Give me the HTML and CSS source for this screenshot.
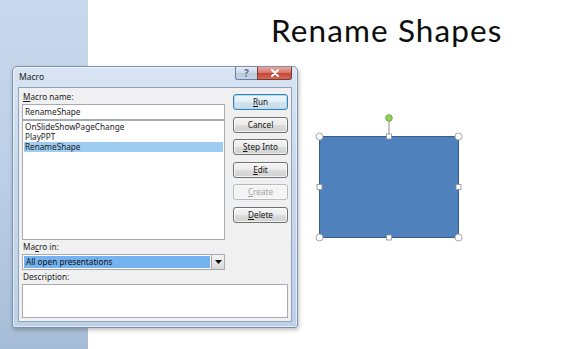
FILE: index.html
```html
<!DOCTYPE html>
<html>
<head>
<meta charset="utf-8">
<link rel="stylesheet" href="styles.css">
</head>
<body>
<div class="screen">
  <div class="strip"></div>
  <div class="slide">
    <h1 class="slide-title">Rename Shapes</h1>
    <svg class="shape" viewBox="88 0 492 349" width="492" height="349">
      <line x1="389" y1="121" x2="389" y2="134" stroke="#8c8c8c" stroke-width="1"/>
      <rect x="319.5" y="136.5" width="139" height="101" fill="#4f81bd" stroke="#385d8a" stroke-width="1"/>
      <circle cx="389" cy="118" r="3.3" fill="#8fd14f" stroke="#5f9b35" stroke-width="0.8"/>
      <g fill="#ffffff" stroke="#8a8f96" stroke-width="0.8">
        <circle cx="319.5" cy="136.5" r="3.5"/>
        <circle cx="458.5" cy="136.5" r="3.5"/>
        <circle cx="319.5" cy="237.5" r="3.5"/>
        <circle cx="458.5" cy="237.5" r="3.5"/>
        <rect x="386.5" y="134" width="5" height="5"/>
        <rect x="386.5" y="235" width="5" height="5"/>
        <rect x="317" y="184.5" width="5" height="5"/>
        <rect x="456" y="184.5" width="5" height="5"/>
      </g>
    </svg>
  </div>

  <div class="dialog">
    <div class="titlebar">
      <span class="dlg-title">Macro</span>
      <div class="caption-btns">
        <div class="cap-btn help">?</div>
        <div class="cap-btn close">
          <svg width="10" height="8" viewBox="0 0 10 8"><path d="M2 1 L8 7 M8 1 L2 7" stroke="#ffffff" stroke-width="2" stroke-linecap="round"/></svg>
        </div>
      </div>
    </div>
    <div class="client">
      <div class="top">
        <div class="left">
          <div class="label"><u>M</u>acro name:</div>
          <div class="field">RenameShape</div>
          <div class="list">
            <div class="item">OnSlideShowPageChange</div>
            <div class="item">PlayPPT</div>
            <div class="item selected">RenameShape</div>
          </div>
          <div class="label">Ma<u>c</u>ro in:</div>
          <div class="combo">
            <div class="combo-value">All open presentations</div>
            <div class="combo-arrow"><svg width="7" height="4" viewBox="0 0 7 4"><path d="M0 0 H7 L3.5 4 Z" fill="#111"/></svg></div>
          </div>
        </div>
        <div class="buttons">
          <div class="btn default"><u>R</u>un</div>
          <div class="btn">Cancel</div>
          <div class="btn"><u>S</u>tep Into</div>
          <div class="btn"><u>E</u>dit</div>
          <div class="btn disabled"><u>C</u>reate</div>
          <div class="btn"><u>D</u>elete</div>
        </div>
      </div>
      <div class="label">Description:</div>
      <div class="desc"></div>
    </div>
  </div>
</div>
</body>
</html>
```
FILE: styles.css
```css
html, body {
  margin: 0;
  padding: 0;
}
body {
  width: 580px;
  height: 349px;
  overflow: hidden;
  background: #ffffff;
}
.screen {
  position: relative;
  display: flex;
  width: 580px;
  height: 349px;
}
.strip {
  width: 88px;
  flex: none;
  background: linear-gradient(180deg, #c9d9ed 0%, #bccfe6 50%, #a7bdd7 100%);
}
.slide {
  position: relative;
  flex: 1;
  background: #ffffff;
}
.slide-title {
  margin: 12px 0 0 183px;
  font-family: Lato, "Open Sans", sans-serif;
  font-weight: 400;
  font-size: 31.5px;
  letter-spacing: 1.1px;
  line-height: 36px;
  color: #0d0d0d;
}
.shape {
  position: absolute;
  left: 0;
  top: 0;
}

/* dialog window */
.dialog {
  position: absolute;
  left: 12px;
  top: 66px;
  width: 274px;
  height: 255px;
  padding: 0 5px 5px 5px;
  border: 1px solid #7d91aa;
  border-radius: 5px 5px 3px 3px;
  background: linear-gradient(180deg, #d8e4f3 0%, #c9d9ed 40%, #bed1e8 100%);
  box-shadow: 1px 2px 4px rgba(0,0,0,0.25), inset 0 0 0 1px rgba(255,255,255,0.55);
  font-family: "Noto Sans", "Open Sans", sans-serif;
  color: #1b1b1b;
}
.titlebar {
  height: 20px;
  display: flex;
  align-items: flex-start;
  justify-content: space-between;
}
.dlg-title {
  margin: 4px 0 0 1px;
  font-size: 8.5px;
  line-height: 12px;
  color: #1a1a1a;
}
.caption-btns {
  display: flex;
}
.cap-btn {
  height: 12px;
  border: 1px solid #6c7f98;
  border-top: none;
  display: flex;
  align-items: center;
  justify-content: center;
}
.cap-btn.help {
  width: 21px;
  border-radius: 0 0 0 3px;
  border-right: none;
  background: linear-gradient(180deg, #e3ebf5 0%, #cdd9e8 50%, #b9c9dd 51%, #c8d6e7 100%);
  font-size: 10px;
  font-weight: bold;
  color: #5f7089;
  line-height: 12px;
}
.cap-btn.close {
  width: 33px;
  border-radius: 0 0 3px 0;
  border-color: #7a3a33;
  background: linear-gradient(180deg, #e9a99f 0%, #d7786b 45%, #c4473a 55%, #d56b54 100%);
}

.client {
  border: 1px solid #8fa3bb;
  background: #f0f0f0;
  display: flex;
  flex-direction: column;
  padding: 2px 3px 3px 3px;
  box-sizing: border-box;
  height: 235px;
}
.top {
  display: grid;
  grid-template-columns: 203px 55px;
  column-gap: 8px;
}
.left {
  display: flex;
  flex-direction: column;
}
.label {
  height: 14px;
  font-size: 8.2px;
  line-height: 14px;
  padding-left: 1px;
}
.label u, .btn u {
  text-decoration-thickness: 1px;
  text-underline-offset: 1px;
}
.field {
  height: 16px;
  box-sizing: border-box;
  border: 1px solid #a6abb3;
  background: #ffffff;
  font-size: 8.2px;
  line-height: 14px;
  padding-left: 2px;
}
.list {
  height: 120px;
  box-sizing: border-box;
  border: 1px solid #a6abb3;
  background: #ffffff;
  padding: 1px 1px 0 1px;
}
.item {
  height: 10px;
  font-size: 8.2px;
  line-height: 10px;
  padding-left: 1px;
  white-space: nowrap;
}
.item.selected {
  background: #9ecbf1;
}
.combo {
  height: 16px;
  box-sizing: border-box;
  display: flex;
  border: 1px solid #a6abb3;
  background: #ffffff;
}
.combo-value {
  flex: 1;
  margin: 1px;
  background: #74b3ef;
  font-size: 8.2px;
  line-height: 12px;
  padding-left: 2px;
  color: #101010;
}
.combo-arrow {
  width: 12px;
  border-left: 1px solid #a0a5ad;
  background: linear-gradient(180deg, #f4f4f4 0%, #e6e6e6 50%, #d8d8d8 100%);
  display: flex;
  align-items: center;
  justify-content: center;
}
.buttons {
  display: flex;
  flex-direction: column;
  padding-top: 4px;
  gap: 6.5px;
}
.btn {
  height: 16px;
  box-sizing: border-box;
  border: 1px solid #707070;
  border-radius: 3px;
  background: linear-gradient(180deg, #f4f4f4 0%, #ebebeb 48%, #dddddd 52%, #d0d0d0 100%);
  box-shadow: inset 0 0 0 1px rgba(255,255,255,0.7);
  font-size: 8.2px;
  line-height: 14px;
  text-align: center;
  color: #141414;
}
.btn.default {
  border-color: #3c7fb1;
  box-shadow: inset 0 0 0 1px #a9dcf6;
  background: linear-gradient(180deg, #eef6fb 0%, #e2eef6 48%, #d3e3ee 52%, #c6dbe9 100%);
}
.btn.disabled {
  border-color: #b5b9bd;
  background: #f4f4f4;
  color: #9fa3a7;
}
.desc {
  height: 34px;
  box-sizing: border-box;
  border: 1px solid #a6abb3;
  background: #ffffff;
}
```
